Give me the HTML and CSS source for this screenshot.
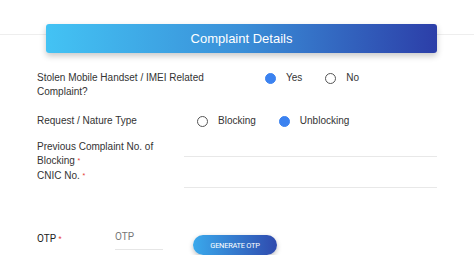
FILE: index.html
```html
<!DOCTYPE html>
<html>
<head>
<meta charset="utf-8">
<link rel="stylesheet" href="styles.css">
</head>
<body>
<div class="topline"></div>
<div class="header">Complaint Details</div>
<div class="form">
  <div class="row row1">
    <div class="label label1">Stolen Mobile Handset / IMEI Related Complaint?</div>
    <div class="radios radios1">
      <div class="radio-item"><span class="radio checked"></span><span class="rtext">Yes</span></div>
      <div class="radio-item"><span class="radio"></span><span class="rtext">No</span></div>
    </div>
  </div>
  <div class="row row2">
    <div class="label label2">Request / Nature Type</div>
    <div class="radios">
      <div class="radio-item"><span class="radio"></span><span class="rtext">Blocking</span></div>
      <div class="radio-item"><span class="radio checked"></span><span class="rtext">Unblocking</span></div>
    </div>
  </div>
  <div class="row row3">
    <div class="label label2">
      <div>Previous Complaint No. of</div>
      <div>Blocking <span class="req">*</span></div>
    </div>
    <div class="field field3"></div>
  </div>
  <div class="row row4">
    <div class="label label2">CNIC No. <span class="req">*</span></div>
    <div class="field field4"></div>
  </div>
  <div class="row otp-row">
    <div class="otp-label">OTP <span class="req">*</span></div>
    <div class="otp-input">OTP</div>
    <button class="otp-btn">GENERATE OTP</button>
  </div>
</div>
</body>
</html>
```
FILE: styles.css
```css
html, body {
  margin: 0;
  padding: 0;
  background: #ffffff;
}
body {
  font-family: "Liberation Sans", Arial, sans-serif;
  color: #333333;
  font-size: 10px;
}
.topline {
  height: 34px;
  border-bottom: 1px solid #eeeeee;
}
.header {
  margin: -11px 0 0 46px;
  width: 391px;
  height: 29px;
  border-radius: 3px;
  background: linear-gradient(90deg, #43c3f4 0%, #3a8fd8 50%, #2c3ea8 100%);
  box-shadow: 0 3px 6px rgba(0, 0, 0, 0.22);
  color: #ffffff;
  font-size: 13px;
  display: flex;
  align-items: center;
  justify-content: center;
}
.form {
  padding-left: 37px;
}
.row {
  display: flex;
  align-items: flex-start;
}
.label {
  line-height: 14px;
  flex: none;
}
.label1 {
  width: 175px;
}
.label2 {
  width: 147px;
}
.row1 {
  margin-top: 18px;
}
.row2 {
  margin-top: 15px;
}
.row3 {
  margin-top: 12px;
}
.row4 {
  margin-top: 1px;
}
.radios {
  display: flex;
  gap: 23px;
  margin-left: 13px;
}
.radios1 {
  margin-left: 53px;
}
.radio-item {
  display: flex;
  align-items: center;
  gap: 10px;
  height: 14px;
}
.radio {
  width: 9px;
  height: 9px;
  border: 1px solid #555555;
  border-radius: 50%;
  background: #ffffff;
}
.radio.checked {
  border-color: #3b82f0;
  background: #3b82f0;
}
.rtext {
  line-height: 14px;
}
.req {
  color: #e53935;
  font-size: 7px;
  line-height: 1;
  vertical-align: 1px;
}
.field {
  width: 253px;
  border-bottom: 1px solid #e8e8e8;
}
.field3 {
  height: 16px;
}
.field4 {
  height: 18px;
}
.otp-row {
  margin-top: 42px;
  font-family: Roboto, "Liberation Sans", sans-serif;
}
.otp-label {
  width: 78px;
  margin-top: 2px;
  line-height: 14px;
  font-size: 10px;
  color: #222222;
}
.otp-input {
  width: 48px;
  height: 19px;
  border-bottom: 1px solid #e6e6e6;
  line-height: 14px;
  color: #777777;
  font-size: 10px;
}
.otp-btn {
  margin: 5px 0 0 30px;
  width: 84px;
  height: 20px;
  border: none;
  border-radius: 10px;
  padding: 0;
  background: linear-gradient(90deg, #3aa9ec 0%, #2f4aae 100%);
  box-shadow: 0 2px 5px rgba(0, 0, 0, 0.25);
  color: #ffffff;
  font-family: Roboto, "Liberation Sans", sans-serif;
  font-size: 7.5px;
  letter-spacing: -0.3px;
}
```
